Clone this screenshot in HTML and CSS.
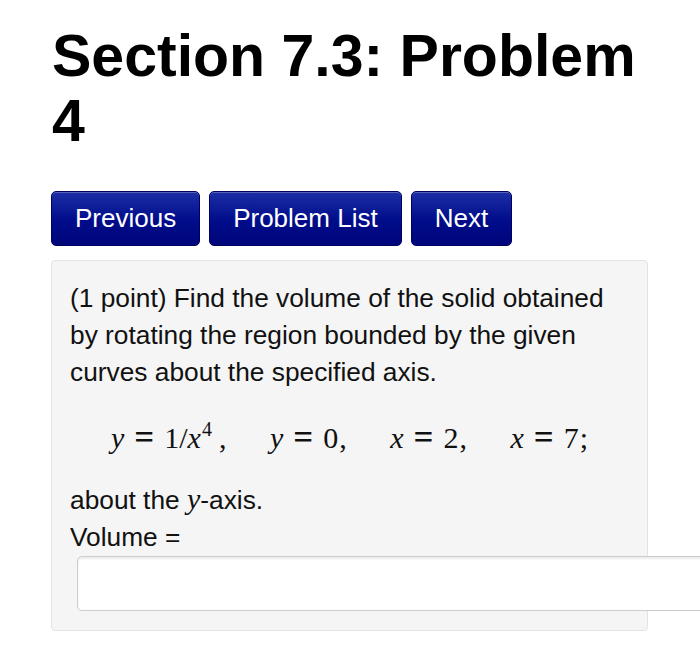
FILE: index.html
```html
<!DOCTYPE html>
<html>
<head>
<meta charset="utf-8">
<link rel="stylesheet" href="styles.css">
</head>
<body>
<div class="page">
  <h1 class="title">Section 7.3: Problem 4</h1>
  <div class="nav">
    <a class="btn">Previous</a>
    <a class="btn">Problem List</a>
    <a class="btn">Next</a>
  </div>
  <div class="problem">
    <p class="text">(1 point) Find the volume of the solid obtained by rotating the region bounded by the given curves about the specified axis.</p>
    <div class="math">
      <span class="term"><i>y</i><span class="eq">=</span>1/<i>x</i><sup>4</sup><span class="punct wide">,</span></span>
      <span class="term"><i>y</i><span class="eq">=</span>0<span class="punct">,</span></span>
      <span class="term"><i>x</i><span class="eq">=</span>2<span class="punct">,</span></span>
      <span class="term"><i>x</i><span class="eq">=</span>7<span class="punct">;</span></span>
    </div>
    <div class="line">about the <i class="mi">y</i>-axis.</div>
    <div class="line">Volume =</div>
    <div class="answer"></div>
  </div>
</div>
</body>
</html>
```
FILE: styles.css
```css
html, body {
  margin: 0;
  padding: 0;
  background: #ffffff;
}
body {
  font-family: "Liberation Sans", Arial, sans-serif;
  color: #111;
  overflow: hidden;
}
.page {
  padding: 0 52px 0 51px;
}
.title {
  margin: 24px 0 0 1px;
  font-size: 59px;
  line-height: 65px;
  font-weight: bold;
  color: #000;
}
.nav {
  display: flex;
  gap: 9px;
  margin-top: 37px;
}
.btn {
  display: block;
  height: 53px;
  line-height: 53px;
  padding: 0 23px;
  font-size: 26px;
  color: #fff;
  border: 1px solid #000060;
  border-radius: 5px;
  background: linear-gradient(#1c2ea6, #000c8a 55%, #00067a);
  box-shadow: inset 0 1px 0 rgba(255,255,255,0.25);
}
.problem {
  margin-top: 14px;
  background: #f5f5f5;
  border: 1px solid #e3e3e3;
  border-radius: 4px;
  padding: 19px 18px 19px 18px;
  font-size: 26.3px;
  line-height: 37px;
  color: #111;
}
.text {
  margin: 0;
}
.math {
  margin: 27px 0 22px;
  text-align: center;
  font-family: "Liberation Serif", "Times New Roman", serif;
  font-size: 30px;
  line-height: 40px;
  color: #111;
}
.term {
  margin: 0 18px;
  white-space: nowrap;
}
.eq {
  margin: 0 10px;
  font-size: 35px;
  font-weight: bold;
  vertical-align: -1px;
}
.math sup {
  font-size: 20px;
  vertical-align: 12px;
  line-height: 0;
  margin-left: 1px;
}
.punct {
  margin-left: 1px;
}
.punct.wide {
  margin-left: 7px;
}
.mi {
  font-family: "Liberation Serif", "Times New Roman", serif;
  font-size: 30px;
}
.answer {
  margin-left: 7px;
  width: 640px;
  height: 53px;
  background: #fff;
  border: 1px solid #cccccc;
  border-radius: 5px;
  box-shadow: inset 0 2px 2px rgba(0,0,0,0.08);
}
```
